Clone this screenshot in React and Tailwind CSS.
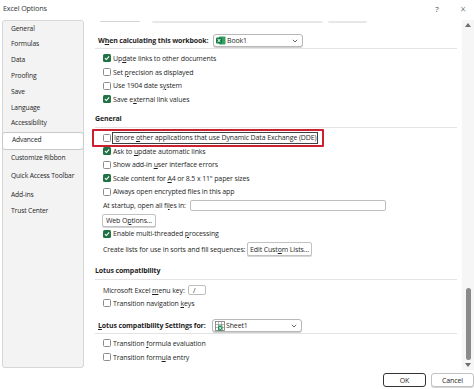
import React from "react";

const FONT = "font-['Open_Sans',sans-serif]";

function CB({ checked }) {
  if (checked) {
    return (
      <span className="w-[8px] h-[8px] rounded-[1.5px] bg-[#217346] flex items-center justify-center shrink-0">
        <svg width="6" height="6" viewBox="0 0 6 6">
          <path d="M0.9 3.1 L2.4 4.5 L5.1 1.4" stroke="white" strokeWidth="1.1" fill="none" />
        </svg>
      </span>
    );
  }
  return <span className="w-[8px] h-[8px] rounded-[1.5px] border border-[#8c8c8c] bg-white shrink-0" />;
}

function Row({ checked, children, h = "h-[14px]" }) {
  return (
    <div className={`${h} flex items-center pl-[8px] gap-[2px]`}>
      <CB checked={checked} />
      <span className="whitespace-nowrap">{children}</span>
    </div>
  );
}

const U = ({ children }) => <span className="underline underline-offset-[1px]">{children}</span>;

function ExcelIcon() {
  return (
    <svg width="10" height="9" viewBox="0 0 10 9">
      <rect x="3" y="0.5" width="6.5" height="8" rx="1" fill="#33a165" />
      <rect x="0" y="1.5" width="6" height="6" rx="1" fill="#107c41" />
      <path d="M1.6 2.9 L4.4 6.1 M4.4 2.9 L1.6 6.1" stroke="white" strokeWidth="1" />
    </svg>
  );
}

function SheetIcon() {
  return (
    <svg width="10" height="10" viewBox="0 0 10 10">
      <rect x="0.5" y="0.5" width="9" height="9" fill="#fff" stroke="#777" strokeWidth="0.8" />
      <path d="M0.5 3.5 H9.5 M0.5 6.5 H9.5 M3.5 0.5 V9.5 M6.5 0.5 V9.5" stroke="#888" strokeWidth="0.6" />
      <rect x="3" y="4.5" width="4.5" height="5" fill="#1e8a4c" />
      <path d="M4 5.6 L6.5 8.6 M6.5 5.6 L4 8.6" stroke="white" strokeWidth="0.8" />
    </svg>
  );
}

function Chevron() {
  return (
    <svg width="6" height="4" viewBox="0 0 6 4">
      <path d="M0.8 0.8 L3 3 L5.2 0.8" stroke="#555" strokeWidth="0.9" fill="none" />
    </svg>
  );
}

function Dropdown({ icon, label }) {
  return (
    <div className="w-[90px] h-[13px] rounded-[3px] border border-[#b8b8b8] bg-white flex items-center pl-[2px] pr-[4px] shadow-[0_1px_0_#d0d0d0]">
      {icon}
      <span className="ml-[1px] flex-1 font-normal">{label}</span>
      <Chevron />
    </div>
  );
}

function Btn({ children, w }) {
  return (
    <div className={`${w} h-[13px] rounded-[2px] border border-[#c2c2c2] bg-white flex items-center justify-center shadow-[0_1px_0_#d6d6d6]`}>
      <span className="whitespace-nowrap">{children}</span>
    </div>
  );
}

function SideItem({ children, h = "h-[15.8px]" }) {
  return <div className={`${h} flex items-center pl-[8px] text-[#262626] whitespace-nowrap`}>{children}</div>;
}

export default function App() {
  return (
    <div className={`${FONT} w-[474px] h-[389px] bg-white relative overflow-hidden text-[7px] tracking-[-0.13px] leading-none text-[#1f1f1f]`}>
      {/* Title bar */}
      <div className="h-[18px] flex items-center">
        <span className="pl-[3px] text-[7.2px] text-[#333]">Excel Options</span>
        <span className="ml-auto w-[10px] text-center text-[8px] text-[#444]">?</span>
        <span className="ml-[16px] mr-[6px] w-[10px] text-center text-[10px] text-[#444] font-light">×</span>
      </div>

      {/* Body */}
      <div className="flex h-[352px]">
        {/* Sidebar */}
        <div className="ml-[2px] mt-[2px] w-[82px] h-[348px] bg-[#f3f3f3] border border-[#d6d6d6] rounded-[3px] flex flex-col text-[6.7px]">
          <SideItem>General</SideItem>
          <SideItem>Formulas</SideItem>
          <SideItem>Data</SideItem>
          <SideItem>Proofing</SideItem>
          <SideItem>Save</SideItem>
          <SideItem>Language</SideItem>
          <SideItem>Accessibility</SideItem>
          <div className="-mx-[1px] h-[18px] bg-white border border-[#c9c9c9] rounded-[3px] flex items-center pl-[9px] text-[#262626]">Advanced</div>
          <SideItem h="h-[18px]">Customize Ribbon</SideItem>
          <SideItem h="h-[18px]">Quick Access Toolbar</SideItem>
          <div className="h-[2px]" />
          <SideItem h="h-[16px]">Add-ins</SideItem>
          <SideItem h="h-[16px]">Trust Center</SideItem>
        </div>

        {/* Content */}
        <div className="flex-1 overflow-hidden">
          <div className="pl-[11px] pr-[5px] flex flex-col">
            {/* faded clipped row */}
            <div className="h-[15px] flex items-start pl-[5px] opacity-40">
              <div className="mt-[1px] h-[3px] w-[40px] border-b border-[#999]" />
              <div className="ml-[12px] mt-[1px] w-[171px] h-[4px] border-b-2 border-[#c4c4c4] rounded-b-[2px]" />
              <div className="ml-[5px] mt-[1px] w-[39px] h-[4px] border-b-2 border-[#c4c4c4] rounded-b-[2px]" />
            </div>
            {/* When calculating */}
            <div className="h-[15px] flex items-center pl-[3px] font-bold">
              <span className="w-[115px] whitespace-nowrap">W<U>h</U>en calculating this workbook:</span>
              <Dropdown icon={<ExcelIcon />} label="Book1" />
            </div>
            <div className="h-px bg-[#e3e3e3]" />
            <div className="h-[2px]" />
            <Row checked>Up<U>d</U>ate links to other documents</Row>
            <Row>Set <U>p</U>recision as displayed</Row>
            <Row h="h-[13px]">Use 1904 date s<U>y</U>stem</Row>
            <Row checked>Save e<U>x</U>ternal link values</Row>
            <div className="h-[5px]" />
            <div className="h-[14px] flex items-center font-bold">General</div>
            <div className="h-[2px]" />
            <div className="h-px bg-[#e3e3e3]" />
            <div className="h-[3px]" />
            {/* Ignore row with red annotation */}
            <div className="relative h-[13px] flex items-center pl-[8px] gap-[1px]">
              <CB />
              <span className="whitespace-nowrap border border-[#404040] px-[1px] h-[12px] leading-[10px]">
                Ignore <U>o</U>ther applications that use Dynamic Data Exchange (DDE)
              </span>
              <div className="absolute left-[-3px] top-[-2px] w-[232px] h-[18px] border-2 border-[#cc1f2f] rounded-[1px]" />
            </div>
            <Row checked>Ask to <U>u</U>pdate automatic links</Row>
            <Row h="h-[13px]">Show add-in <U>u</U>ser interface errors</Row>
            <Row checked>Scale content for <U>A</U>4 or 8.5 x 11" paper sizes</Row>
            <Row h="h-[13px]">Always open encrypted files in this app</Row>
            <div className="h-[14px] flex items-center pl-[8px]">
              <span className="w-[87px] whitespace-nowrap">At startup, open all fi<U>l</U>es in:</span>
              <div className="w-[196px] h-[11px] border border-[#bdbdbd] rounded-[2px] bg-white" />
            </div>
            <div className="h-[1px]" />
            <div className="h-[14px] flex items-center pl-[7px]">
              <Btn w="w-[54px]">Web O<U>p</U>tions...</Btn>
            </div>
            <Row h="h-[13px]" checked>Enable multi-threaded <U>p</U>rocessing</Row>
            <div className="h-[1px]" />
            <div className="h-[16px] flex items-center pl-[8px]">
              <span className="w-[144px] whitespace-nowrap">Create lists for use in sorts and fill sequences:</span>
              <Btn w="w-[65px] h-[14px]">Edit Cust<U>o</U>m Lists...</Btn>
            </div>
            <div className="h-[6px]" />
            <div className="h-[14px] flex items-center font-bold">Lotus compatibility</div>
            <div className="h-[2px]" />
            <div className="h-px bg-[#e3e3e3]" />
            <div className="h-[4px]" />
            <div className="h-[12px] flex items-center pl-[8px]">
              <span className="w-[85px] whitespace-nowrap">Microsoft Excel <U>m</U>enu key:</span>
              <div className="w-[18px] h-[10px] border border-[#bdbdbd] rounded-[2px] bg-white flex items-center pl-[4px]">/</div>
            </div>
            <Row>Transition navigation <U>k</U>eys</Row>
            <div className="h-[9px]" />
            <div className="h-[13px] flex items-center pl-[3px] font-bold">
              <span className="w-[114px] whitespace-nowrap"><U>L</U>otus compatibility Settings for:</span>
              <Dropdown icon={<SheetIcon />} label="Sheet1" />
            </div>
            <div className="h-[1px]" />
            <div className="h-px bg-[#e3e3e3]" />
            <div className="h-[2px]" />
            <Row>Transition <U>f</U>ormula evaluation</Row>
            <Row>Transition form<U>u</U>la entry</Row>
          </div>
        </div>

        {/* Scrollbar */}
        <div className="w-[12px] mt-[2px] h-[350px] bg-[#f6f6f6] flex flex-col items-center">
          <div className="mt-[3px] w-0 h-0 border-l-[3px] border-r-[3px] border-b-[4px] border-l-transparent border-r-transparent border-b-[#6e6e6e]" />
          <div className="flex-1" />
          <div className="w-[5px] h-[72px] rounded-full bg-[#8a8a8a] ml-[1px]" />
          <div className="mt-[3px] mb-[3px] w-0 h-0 border-l-[3px] border-r-[3px] border-t-[4px] border-l-transparent border-r-transparent border-t-[#6e6e6e]" />
        </div>
      </div>

      {/* Footer */}
      <div className="h-[19px] flex items-start justify-end gap-[5px] pt-[3px]">
        <div className="w-[43px] h-[14px] rounded-[3px] border-[1.5px] border-[#333] bg-white flex items-center justify-center">OK</div>
        <div className="w-[43px] h-[14px] rounded-[3px] border border-[#c2c2c2] bg-white flex items-center justify-center shadow-[0_1px_0_#d6d6d6]">Cancel</div>
      </div>
    </div>
  );
}
